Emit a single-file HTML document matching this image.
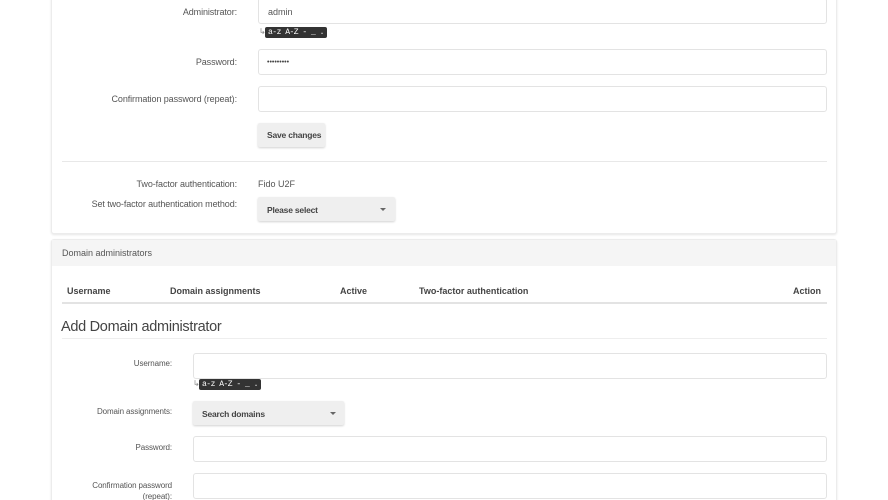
<!DOCTYPE html>
<html><head><meta charset="utf-8"><style>
*{box-sizing:border-box;margin:0;padding:0}
html,body{width:888px;height:500px;overflow:hidden}
body{background:#fff;font-family:"Liberation Sans",sans-serif;color:#555;position:relative;font-size:9px}
.a{position:absolute}
.panel{position:absolute;left:51px;width:786px;background:#fff;border:1px solid #ececec;border-radius:3px;box-shadow:0 1px 2px rgba(0,0,0,.1)}
.inp{position:absolute;border:1px solid #e3e3e3;border-radius:3px;background:#fff}
.lbl{position:absolute;text-align:right;color:#555;letter-spacing:-0.1px}
.btn{position:absolute;background:#efefef;border-radius:2px;box-shadow:0 1px 2px rgba(0,0,0,.18);font-weight:bold;color:#444;font-size:8.5px;letter-spacing:-0.2px}
.tag{position:absolute;background:#333;color:#fff;font-family:"Liberation Mono",monospace;font-size:8px;border-radius:2px;padding:0 3px;line-height:11px;letter-spacing:-0.5px}
.caret{position:absolute;width:0;height:0;border-left:3px solid transparent;border-right:3px solid transparent;border-top:3px solid #666}
</style></head><body>
<div class="panel" style="top:-5px;height:239px"></div>
<div class="panel" style="top:239px;height:270px"></div>
<div class="a" style="left:52px;top:240px;width:784px;height:26px;background:#f5f5f5"></div>
<div class="a" style="left:62px;top:248px;font-size:9px;color:#555">Domain administrators</div>

<div class="lbl" style="right:651px;top:7px">Administrator:</div>
<div class="inp" style="left:258px;top:-2px;width:569px;height:26px"><span class="a" style="left:9px;top:8px;color:#555">admin</span></div>
<div class="a" style="left:259px;top:27px;font-size:8px;color:#888">↳</div>
<div class="tag" style="left:265px;top:27px">a-z A-Z - _ .</div>

<div class="lbl" style="right:651px;top:57px">Password:</div>
<div class="inp" style="left:258px;top:49px;width:569px;height:26px"><span class="a" style="left:8px;top:8px;color:#444;font-size:7px;line-height:9px">•••••••••</span></div>

<div class="lbl" style="right:651px;top:94px">Confirmation password (repeat):</div>
<div class="inp" style="left:258px;top:86px;width:569px;height:26px"></div>

<div class="btn" style="left:258px;top:123px;width:67px;height:24px;padding:7px 0 0 9px">Save changes</div>

<div class="a" style="left:62px;top:161px;width:765px;height:1px;background:#e8e8e8"></div>

<div class="lbl" style="right:651px;top:179px">Two-factor authentication:</div>
<div class="a" style="left:258px;top:179px">Fido U2F</div>
<div class="lbl" style="right:651px;top:199px">Set two-factor authentication method:</div>
<div class="btn" style="left:258px;top:197px;width:137px;height:24px;padding:8px 0 0 9px">Please select</div>
<div class="caret" style="left:380px;top:208px"></div>

<div class="a" style="left:67px;top:286px;font-weight:bold;color:#444">Username</div>
<div class="a" style="left:170px;top:286px;font-weight:bold;color:#444">Domain assignments</div>
<div class="a" style="left:340px;top:286px;font-weight:bold;color:#444">Active</div>
<div class="a" style="left:419px;top:286px;font-weight:bold;color:#444">Two-factor authentication</div>
<div class="a" style="left:793px;top:286px;font-weight:bold;color:#444">Action</div>
<div class="a" style="left:62px;top:302px;width:765px;height:2px;background:#e3e3e3"></div>

<div class="a" style="left:61px;top:319px;font-size:14.5px;color:#444;letter-spacing:-0.3px">Add Domain administrator</div>
<div class="a" style="left:62px;top:338px;width:765px;height:1px;background:#eee"></div>

<div class="lbl" style="right:716px;top:359px;font-size:8px">Username:</div>
<div class="inp" style="left:193px;top:353px;width:634px;height:26px"></div>
<div class="a" style="left:193px;top:379px;font-size:8px;color:#888">↳</div>
<div class="tag" style="left:199px;top:379px">a-z A-Z - _ .</div>

<div class="lbl" style="right:716px;top:407px;font-size:8px">Domain assignments:</div>
<div class="btn" style="left:193px;top:401px;width:151px;height:24px;padding:8px 0 0 9px">Search domains</div>
<div class="caret" style="left:330px;top:412px"></div>

<div class="lbl" style="right:716px;top:443px;font-size:8px">Password:</div>
<div class="inp" style="left:193px;top:436px;width:634px;height:26px"></div>

<div class="lbl" style="right:716px;top:480px;font-size:8px;line-height:11px">Confirmation password<br>(repeat):</div>
<div class="inp" style="left:193px;top:473px;width:634px;height:26px"></div>
</body></html>
